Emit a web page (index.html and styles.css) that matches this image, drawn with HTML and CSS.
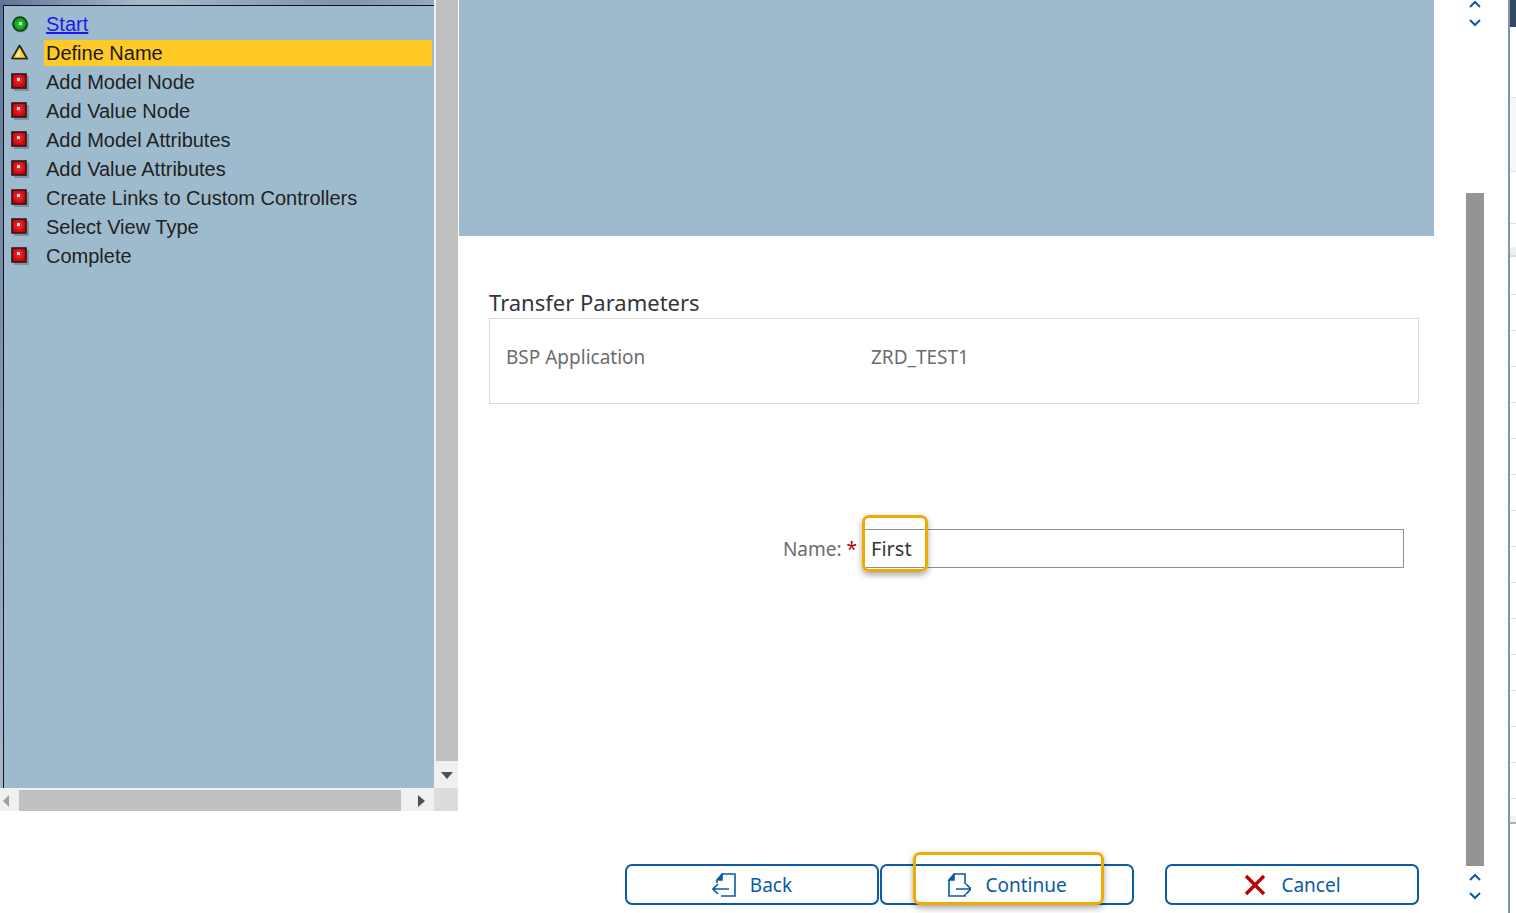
FILE: index.html
```html
<!DOCTYPE html>
<html lang="en">
<head>
    <meta charset="UTF-8">
    <title>Define Name</title>
    <link rel="stylesheet" href="styles.css">
</head>
<body>
    <svg class="defs" width="0" height="0">
        <defs>
            <radialGradient id="redGlow" cx="50%" cy="45%" r="55%">
                <stop offset="0" stop-color="#ff3030"/>
                <stop offset="1" stop-color="#c00008"/>
            </radialGradient>
            <radialGradient id="greenGlow" cx="50%" cy="50%" r="55%">
                <stop offset="0" stop-color="#30e030"/>
                <stop offset="1" stop-color="#007a10"/>
            </radialGradient>
            <symbol id="red" viewBox="0 0 18 18">
                <rect x="3" y="3" width="15" height="15" fill="#7d929f"/>
                <rect x="1" y="1" width="14" height="14" fill="url(#redGlow)" stroke="#30141a" stroke-width="1.6"/>
                <rect x="6" y="5" width="3" height="3" fill="#ffe0e0"/>
            </symbol>
        </defs>
    </svg>

    <div class="wizard">
        <div class="tree-pane">
            <ul class="tree">
                <li class="step">
                    <svg class="step-icon" viewBox="0 0 18 18">
                        <circle cx="10" cy="10" r="7.5" fill="#7d929f"/>
                        <circle cx="9" cy="9" r="7" fill="url(#greenGlow)" stroke="#153a1c" stroke-width="1.6"/>
                        <rect x="8" y="7" width="3" height="3" fill="#d8ffd8"/>
                    </svg>
                    <a class="step-link" href="#">Start</a>
                </li>
                <li class="step">
                    <svg class="step-icon" viewBox="0 0 18 18">
                        <path d="M3 16 L18 16 L11 3 Z" fill="#7d929f"/>
                        <path d="M8.5 1.5 L1 14.5 L16 14.5 Z" fill="#ffd030" stroke="#2a2418" stroke-width="1.7" stroke-linejoin="round"/>
                        <path d="M8.5 5 L5 12.5 L8.5 12.5 Z" fill="#fff6c8"/>
                    </svg>
                    <span class="step-label is-current">Define Name</span>
                </li>
                <li class="step"><svg class="step-icon"><use href="#red"/></svg><span class="step-label">Add Model Node</span></li>
                <li class="step"><svg class="step-icon"><use href="#red"/></svg><span class="step-label">Add Value Node</span></li>
                <li class="step"><svg class="step-icon"><use href="#red"/></svg><span class="step-label">Add Model Attributes</span></li>
                <li class="step"><svg class="step-icon"><use href="#red"/></svg><span class="step-label">Add Value Attributes</span></li>
                <li class="step"><svg class="step-icon"><use href="#red"/></svg><span class="step-label">Create Links to Custom Controllers</span></li>
                <li class="step"><svg class="step-icon"><use href="#red"/></svg><span class="step-label">Select View Type</span></li>
                <li class="step"><svg class="step-icon"><use href="#red"/></svg><span class="step-label">Complete</span></li>
            </ul>
        </div>
        <div class="vscroll">
            <div class="vscroll-thumb"></div>
            <div class="vscroll-arrow"></div>
        </div>
        <div class="hscroll">
            <div class="arrow-left"></div>
            <div class="hscroll-thumb"></div>
            <div class="arrow-right"></div>
        </div>
        <div class="corner"></div>
    </div>

    <div class="main">
        <div class="banner"></div>
        <div class="content">
            <h2 class="section-title">Transfer Parameters</h2>
            <div class="param-box">
                <span class="param-label">BSP Application</span>
                <span class="param-value">ZRD_TEST1</span>
            </div>
            <div class="name-row">
                <label class="name-label">Name: <span class="required">*</span></label>
                <div class="name-input">
                    <span class="name-value">First</span>
                    <div class="highlight highlight-input"></div>
                </div>
            </div>
        </div>
        <div class="actions">
            <button class="btn">
                <svg class="btn-icon" viewBox="0 0 24 24" fill="none" stroke="#0a5aa8" stroke-width="1.6">
                    <path d="M5 8 V10 M10 1 H23 V23 H9"/>
                    <path d="M10 1 L5 7 H10 Z" fill="#0a5aa8"/>
                    <path d="M17 16 H1 M6 11 L1 16 L6 21"/>
                </svg>
                Back
            </button>
            <button class="btn btn-continue">
                <svg class="btn-icon" viewBox="0 0 24 24" fill="none" stroke="#0a5aa8" stroke-width="1.6">
                    <path d="M7 1 H18 V11 M18 21 V23 H2 V7"/>
                    <path d="M7 1 L2 7 H7 Z" fill="#0a5aa8"/>
                    <path d="M9 16 H24 M19 11 L24 16 L19 21"/>
                </svg>
                Continue
                <div class="highlight highlight-btn"></div>
            </button>
            <button class="btn btn-cancel">
                <svg class="btn-icon" viewBox="0 0 24 24" fill="none" stroke="#bb0000" stroke-width="3.4">
                    <path d="M3 3 L21 21 M21 3 L3 21"/>
                </svg>
                Cancel
            </button>
        </div>
    </div>

    <div class="rail">
        <div class="pager pager-top">
            <svg class="chevron" viewBox="0 0 12 8"><path d="M1 7 L6 2 L11 7"/></svg>
            <svg class="chevron" viewBox="0 0 12 8"><path d="M1 1 L6 6 L11 1"/></svg>
        </div>
        <div class="rail-bar"></div>
        <div class="pager">
            <svg class="chevron" viewBox="0 0 12 8"><path d="M1 7 L6 2 L11 7"/></svg>
            <svg class="chevron" viewBox="0 0 12 8"><path d="M1 1 L6 6 L11 1"/></svg>
        </div>
    </div>

    <div class="side-table">
        <div class="side-head"></div>
        <div class="side-row side-gap"></div>
        <div class="side-row side-shaded"></div>
        <div class="side-row side-mid"></div>
        <div class="side-row side-short"></div>
        <div class="side-block"></div>
        <div class="side-row side-tall"></div>
        <div class="side-row"></div>
        <div class="side-row"></div>
        <div class="side-row"></div>
        <div class="side-row"></div>
        <div class="side-row"></div>
        <div class="side-row"></div>
        <div class="side-row"></div>
        <div class="side-row"></div>
        <div class="side-row"></div>
        <div class="side-row"></div>
        <div class="side-row"></div>
        <div class="side-row"></div>
        <div class="side-row"></div>
        <div class="side-row"></div>
        <div class="side-row side-foot"></div>
        <div class="side-block side-block-end"></div>
    </div>
</body>
</html>
```

FILE: styles.css
```css
body {
    margin: 0;
    width: 1516px;
    height: 913px;
    display: flex;
    overflow: hidden;
    background-color: #fff;
    font-family: "Noto Sans", Arial, sans-serif;
}

.defs {
    position: absolute;
}

/* left wizard frame */
.wizard {
    width: 458px;
    height: 811px;
    flex-shrink: 0;
    display: grid;
    grid-template-columns: 434px 24px;
    grid-template-rows: 788px 23px;
}

.tree-pane {
    padding: 5px 0 0 3px;
    background: linear-gradient(100deg, #5d7499, #a9b9c9 25%, #7f93ad 60%, #c0ccd8);
}

.tree {
    list-style: none;
    margin: 0;
    padding: 3px 0 0 7px;
    height: 780px;
    background-color: #9ebbce;
    border-top: 1px solid #10141c;
    border-left: 1px solid #10141c;
}

.step {
    height: 29px;
    display: flex;
    align-items: center;
    color: #222;
    font-family: "Liberation Sans", Arial, sans-serif;
    font-size: 20px;
}

.step-icon {
    width: 18px;
    height: 18px;
    flex-shrink: 0;
    margin-right: 15px;
}

.step-link,
.step-label {
    flex: 1;
    padding: 0 2px;
    line-height: 26px;
    margin-right: 2px;
}

.step-link {
    flex: none;
    color: #1a1aee;
}

.is-current {
    background-color: #ffc926;
    color: #1a1a1a;
}

.vscroll {
    background-color: #f0f0f0;
    padding-left: 2px;
}

.vscroll-thumb {
    height: 761px;
    background-color: #c0c0c0;
}

.vscroll-arrow {
    width: 0;
    margin: 11px 0 0 5px;
    border-top: 7px solid #505050;
    border-left: 6px solid transparent;
    border-right: 6px solid transparent;
}

.hscroll {
    display: flex;
    align-items: center;
    background-color: #f0f0f0;
    padding-top: 2px;
    box-sizing: border-box;
}

.hscroll-thumb {
    width: 382px;
    height: 21px;
    background-color: #c0c0c0;
}

.arrow-left {
    width: 0;
    margin: 0 10px 0 3px;
    border-right: 6px solid #a0a0a0;
    border-top: 6px solid transparent;
    border-bottom: 6px solid transparent;
}

.arrow-right {
    width: 0;
    margin-left: 17px;
    border-left: 7px solid #505050;
    border-top: 6px solid transparent;
    border-bottom: 6px solid transparent;
}

.corner {
    background-color: #dcdcdc;
}

/* main form */
.main {
    width: 975px;
    margin-left: 1px;
    flex-shrink: 0;
    display: flex;
    flex-direction: column;
}

.banner {
    height: 236px;
    background-color: #9ebbce;
}

.content {
    flex: 1;
    padding: 0 15px 0 30px;
}

.section-title {
    margin: 50px 0 0;
    font-size: 22px;
    font-weight: 400;
    line-height: 32px;
    color: #32363a;
}

.param-box {
    height: 84px;
    border: 1px solid #d9d9d9;
    display: flex;
    padding: 25px 0 0 16px;
    box-sizing: content-box;
    height: 59px;
    font-size: 19px;
    color: #6a6d70;
    line-height: 26px;
}

.param-label {
    width: 365px;
}

.name-row {
    display: flex;
    align-items: center;
    justify-content: flex-end;
    margin: 125px 15px 0 0;
}

.name-label {
    font-size: 19px;
    color: #6a6d70;
    margin-right: 6px;
}

.required {
    color: #bb0000;
}

.name-input {
    position: relative;
    width: 532px;
    height: 37px;
    padding-left: 7px;
    border: 1px solid #89919a;
    font-size: 20px;
    line-height: 37px;
    color: #32363a;
}

.highlight {
    position: absolute;
    box-sizing: border-box;
    border: 3px solid #f0ab00;
    border-radius: 7px;
    box-shadow: 0 3px 6px rgba(0, 0, 0, 0.35);
}

.highlight-input {
    left: -2px;
    top: -15px;
    width: 66px;
    height: 57px;
}

.highlight-btn {
    left: 31px;
    top: -14px;
    width: 191px;
    height: 53px;
}

.actions {
    display: flex;
    justify-content: flex-end;
    padding: 0 15px 8px 0;
}

.btn {
    position: relative;
    width: 254px;
    height: 41px;
    margin-left: 1px;
    display: flex;
    align-items: center;
    justify-content: center;
    gap: 14px;
    background-color: #fff;
    border: 2px solid #0a5aa8;
    border-radius: 7px;
    color: #0a5aa8;
    font-family: "Noto Sans", Arial, sans-serif;
    font-size: 19px;
}

.btn-cancel {
    margin-left: 31px;
}

.btn-icon {
    width: 24px;
    height: 24px;
}

/* thin scroll rail */
.rail {
    width: 74px;
    flex-shrink: 0;
    display: flex;
    flex-direction: column;
    align-items: center;
    padding-left: 8px;
    box-sizing: border-box;
}

.pager {
    height: 47px;
    padding-top: 7px;
    box-sizing: border-box;
}

.pager-top {
    height: 193px;
    padding-top: 0;
}

.rail-bar {
    width: 18px;
    height: 673px;
    background-color: #949494;
}

.chevron {
    display: block;
    width: 12px;
    height: 8px;
    margin-bottom: 11px;
    fill: none;
    stroke: #0a5aa8;
    stroke-width: 2;
}

/* cut-off table on the right edge */
.side-table {
    flex: 1;
    border-left: 2px solid #7f95ad;
}

.side-head {
    height: 27px;
    background-color: #34495f;
}

.side-row {
    height: 35px;
    border-bottom: 1px solid #e2e2e2;
}

.side-gap {
    height: 70px;
}

.side-shaded {
    height: 73px;
    background-color: #f7f7f7;
}

.side-mid {
    height: 51px;
}

.side-short {
    height: 23px;
    border-bottom: none;
}

.side-block {
    height: 10px;
    background-color: #eeeff2;
    border-bottom: 2px solid #dcdcdc;
    box-sizing: border-box;
}

.side-tall {
    height: 37px;
}

.side-foot {
    height: 17px;
    border-bottom: none;
}

.side-block-end {
    height: 8px;
    background-color: #f2f2f2;
    border-bottom: 2px solid #b0b0b0;
}
```
